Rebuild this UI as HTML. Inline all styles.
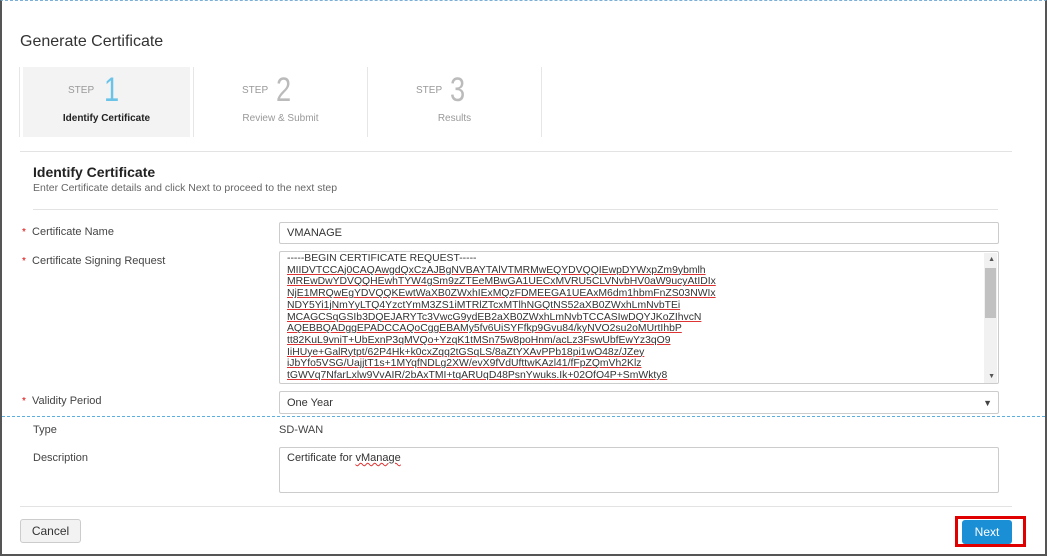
<!DOCTYPE html>
<html><head><style>
*{box-sizing:border-box;margin:0;padding:0}
body{width:1047px;height:556px;overflow:hidden;background:#fff;font-family:"Liberation Sans",Arial,sans-serif;position:relative;color:#333}
.a{position:absolute}
.frame{left:0;top:0;width:1047px;height:556px;border:2px solid #555;border-top:1px dashed #7ab0d8}
.lbl{font-size:11px;color:#444}
.star{color:#d00;font-size:10px}
.inp{border:1px solid #ccc;border-radius:2px;background:#fff;font-size:11px;color:#333;padding-left:7px}
.u{text-decoration:underline wavy #e03030;text-decoration-thickness:1px;color:#333}
.ta{font-size:10.4px;line-height:11.7px;white-space:pre;color:#333}
.ta span{text-decoration:underline;text-decoration-color:#d33;}
.num{font-size:34px;font-weight:normal;transform:scaleX(0.8);transform-origin:left top}
</style></head><body>
<div class="a frame"></div>
<div class="a" style="left:20px;top:33px;font-size:16px;color:#333">Generate Certificate</div>
<div class="a" style="left:19px;top:67px;width:1px;height:70px;background:#e6e6e6"></div>
<div class="a" style="left:23px;top:67px;width:167px;height:70px;background:#f3f3f3"></div>
<div class="a" style="left:193px;top:67px;width:1px;height:70px;background:#e6e6e6"></div>
<div class="a" style="left:367px;top:67px;width:1px;height:70px;background:#e6e6e6"></div>
<div class="a" style="left:541px;top:67px;width:1px;height:70px;background:#e6e6e6"></div>
<div class="a" style="left:68px;top:85px;font-size:10px;color:#999">STEP</div>
<div class="a num" style="left:104px;top:71px;color:#6cc3e8">1</div>
<div class="a" style="left:23px;top:113px;width:167px;text-align:center;font-size:10px;font-weight:bold;color:#222">Identify Certificate</div>
<div class="a" style="left:242px;top:85px;font-size:10px;color:#999">STEP</div>
<div class="a num" style="left:276px;top:71px;color:#bbb">2</div>
<div class="a" style="left:194px;top:113px;width:173px;text-align:center;font-size:10px;color:#999">Review &amp; Submit</div>
<div class="a" style="left:416px;top:85px;font-size:10px;color:#999">STEP</div>
<div class="a num" style="left:450px;top:71px;color:#bbb">3</div>
<div class="a" style="left:368px;top:113px;width:173px;text-align:center;font-size:10px;color:#999">Results</div>
<div class="a" style="left:20px;top:151px;width:992px;height:1px;background:#e3e3e3"></div>
<div class="a" style="left:33px;top:164px;font-size:14px;font-weight:bold;color:#222">Identify Certificate</div>
<div class="a" style="left:33px;top:182px;font-size:10.5px;color:#666">Enter Certificate details and click Next to proceed to the next step</div>
<div class="a" style="left:33px;top:209px;width:965px;height:1px;background:#e3e3e3"></div>

<div class="a lbl" style="left:22px;top:226px"><span class="star">*</span>&nbsp; Certificate Name</div>
<div class="a inp" style="left:279px;top:222px;width:720px;height:22px;line-height:20px">VMANAGE</div>

<div class="a lbl" style="left:22px;top:255px"><span class="star">*</span>&nbsp; Certificate Signing Request</div>
<div class="a inp" style="left:279px;top:251px;width:720px;height:133px;overflow:hidden;padding:1px 0 0 7px">
<div class="ta">-----BEGIN CERTIFICATE REQUEST-----
<span>MIIDVTCCAj0CAQAwgdQxCzAJBgNVBAYTAlVTMRMwEQYDVQQIEwpDYWxpZm9ybmlh</span>
<span>MREwDwYDVQQHEwhTYW4gSm9zZTEeMBwGA1UECxMVRU5CLVNvbHV0aW9ucyAtIDIx</span>
<span>NjE1MRQwEgYDVQQKEwtWaXB0ZWxhIExMQzFDMEEGA1UEAxM6dm1hbmFnZS03NWIx</span>
<span>NDY5Yi1jNmYyLTQ4YzctYmM3ZS1iMTRlZTcxMTlhNGQtNS52aXB0ZWxhLmNvbTEi</span>
<span>MCAGCSqGSIb3DQEJARYTc3VwcG9ydEB2aXB0ZWxhLmNvbTCCASIwDQYJKoZIhvcN</span>
<span>AQEBBQADggEPADCCAQoCggEBAMy5fv6UiSYFfkp9Gvu84/kyNVO2su2oMUrtIhbP</span>
<span>tt82KuL9vniT+UbExnP3qMVQo+YzqK1tMSn75w8poHnm/acLz3FswUbfEwYz3qO9</span>
<span>IiHUye+GalRytpt/62P4Hk+k0cxZqq2tGSqLS/8aZtYXAvPPb18pi1wO48z/JZey</span>
<span>iJbYfo5VSG/UajjtT1s+1MYqfNDLg2XW/evX9fVdUfttwKAzl41/fFpZQmVh2Klz</span>
<span>tGWVq7NfarLxlw9VvAIR/2bAxTMI+tqARUqD48PsnYwuks.Ik+02OfO4P+SmWkty8</span></div>
<div class="a" style="right:1px;top:1px;width:13px;height:130px;background:#f1f1f1"></div>
<div class="a" style="right:2px;top:16px;width:11px;height:50px;background:#c1c1c1"></div>
<div class="a" style="right:3px;top:4px;font-size:7px;color:#555">▲</div>
<div class="a" style="right:3px;bottom:3px;font-size:7px;color:#555">▼</div>
</div>

<div class="a lbl" style="left:22px;top:395px"><span class="star">*</span>&nbsp; Validity Period</div>
<div class="a inp" style="left:279px;top:391px;width:720px;height:23px;line-height:22px">One Year<span style="position:absolute;right:6px;top:0;font-size:9px;color:#444">▼</span></div>
<div class="a" style="left:2px;top:416px;width:1043px;height:0;border-top:1px dashed #5aaee0"></div>

<div class="a lbl" style="left:33px;top:424px">Type</div>
<div class="a" style="left:279px;top:424px;font-size:11px;color:#444">SD-WAN</div>
<div class="a lbl" style="left:33px;top:452px">Description</div>
<div class="a inp" style="left:279px;top:447px;width:720px;height:46px;padding-top:4px">Certificate for <span class="u">vManage</span></div>

<div class="a" style="left:20px;top:506px;width:992px;height:1px;background:#e3e3e3"></div>
<div class="a" style="left:20px;top:519px;width:61px;height:24px;border:1px solid #ccc;border-radius:3px;background:#f2f2f2;font-size:12px;color:#333;text-align:center;line-height:22px">Cancel</div>
<div class="a" style="left:955px;top:516px;width:71px;height:31px;border:3px solid #e00000"></div>
<div class="a" style="left:962px;top:520px;width:50px;height:24px;border-radius:3px;background:#1a8fd6;font-size:12px;color:#fff;text-align:center;line-height:24px">Next</div>
</body></html>
